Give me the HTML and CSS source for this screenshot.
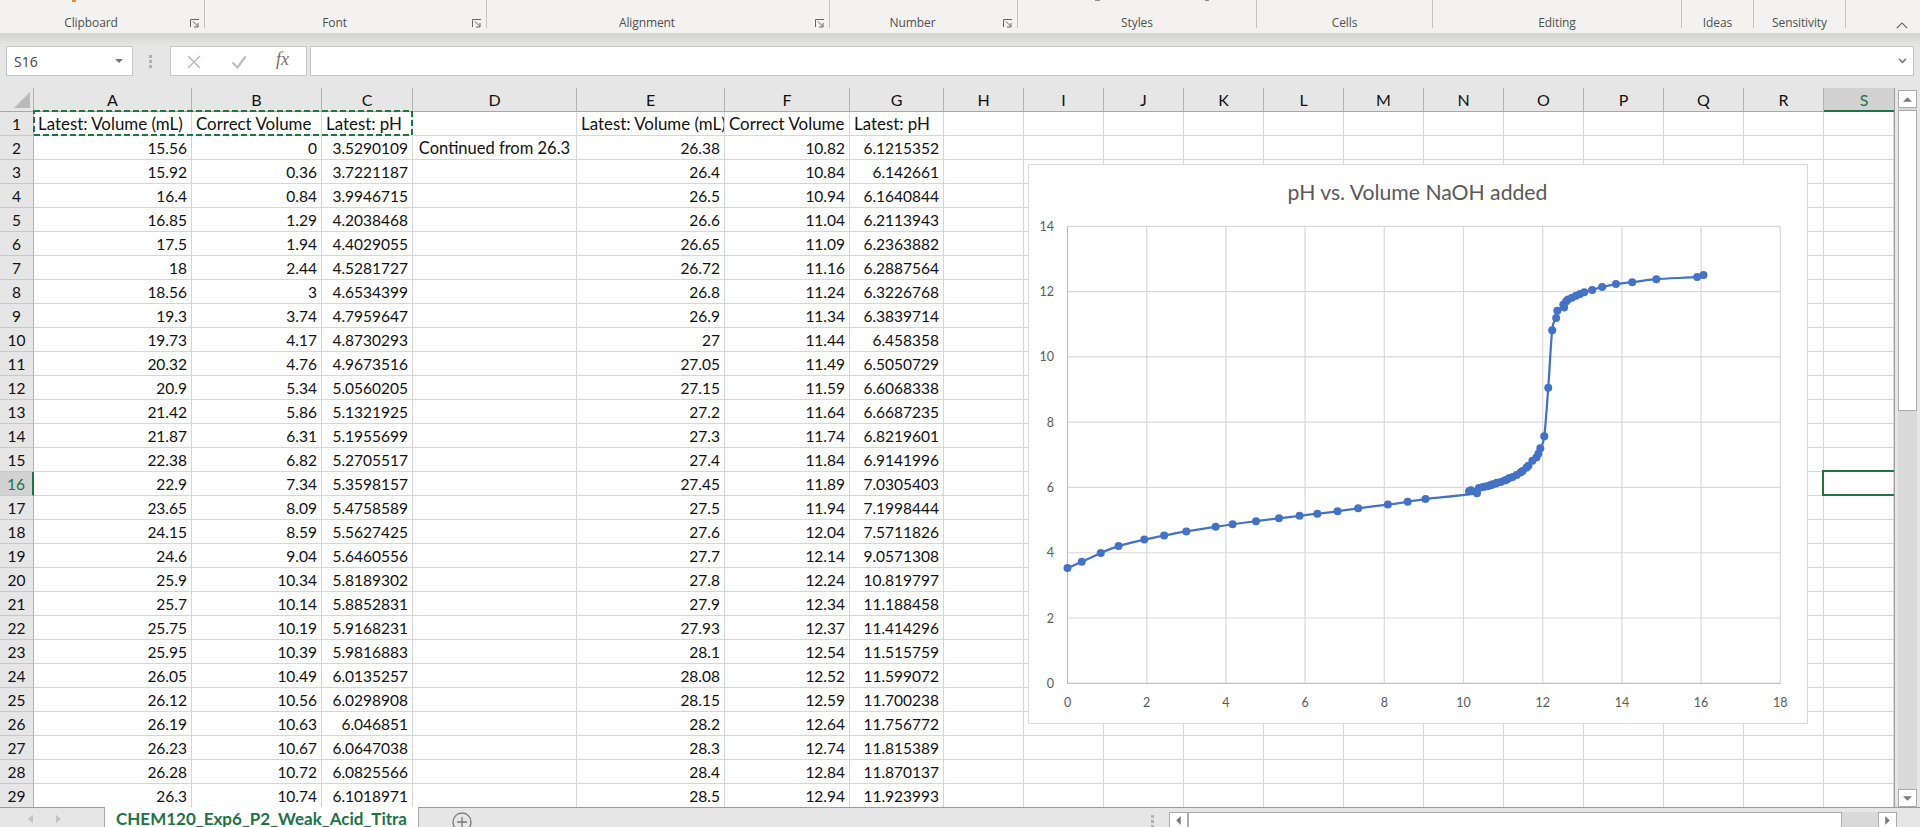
FILE: index.html
```html
<!DOCTYPE html>
<html lang="en">
<head>
<meta charset="utf-8">
<title>CHEM120 Exp6 P2 Weak Acid Titration</title>
<link rel="stylesheet" href="styles.css">
</head>
<body>
<header class="ribbon">
  <span class="frag frag-orange"></span>
  <span class="frag frag-g"></span>
  <span class="frag frag-y"></span>
  <section class="group g-clip"><span class="group-label">Clipboard</span><svg class="launch" viewBox="0 0 10 9"><path d="M.5 8V.5H9M3 2.5l5 5M8 4v4H4" /></svg></section>
  <section class="group g-font"><span class="group-label">Font</span><svg class="launch" viewBox="0 0 10 9"><path d="M.5 8V.5H9M3 2.5l5 5M8 4v4H4" /></svg></section>
  <section class="group g-align"><span class="group-label">Alignment</span><svg class="launch" viewBox="0 0 10 9"><path d="M.5 8V.5H9M3 2.5l5 5M8 4v4H4" /></svg></section>
  <section class="group g-num"><span class="group-label">Number</span><svg class="launch" viewBox="0 0 10 9"><path d="M.5 8V.5H9M3 2.5l5 5M8 4v4H4" /></svg></section>
  <section class="group g-styles plain"><span class="group-label">Styles</span></section>
  <section class="group g-cells plain"><span class="group-label">Cells</span></section>
  <section class="group g-edit plain"><span class="group-label">Editing</span></section>
  <section class="group g-ideas plain"><span class="group-label">Ideas</span></section>
  <section class="group g-sens plain"><span class="group-label">Sensitivity</span></section>
  <svg class="collapse" viewBox="0 0 14 8"><path d="M1 7l6-6 6 6"/></svg>
</header>

<div class="formula-zone">
  <div class="name-box"><span>S16</span><svg class="caret" viewBox="0 0 8 4"><path d="M0 0h8L4 4z"/></svg></div>
  <svg class="grip" viewBox="0 0 3 13"><path d="M0 0h3v3H0zM0 5h3v3H0zM0 10h3v3H0z"/></svg>
  <div class="fx-box">
    <svg class="fx-x" viewBox="0 0 14 14"><path d="M1 1l12 12M13 1L1 13"/></svg>
    <svg class="fx-check" viewBox="0 0 16 14"><path d="M1.5 7.5l5 5L14.5 1.5"/></svg>
    <span class="fx-label">fx</span>
  </div>
  <div class="formula-input"><svg class="expand" viewBox="0 0 10 7"><path d="M1 1l4 4 4-4"/></svg></div>
</div>

<main class="sheet-row">
  <div class="sheet" id="sheet">
    <table class="grid" id="grid">
      <colgroup>
        <col class="c-rh"><col class="c-a"><col class="c-b"><col class="c-c"><col class="c-d"><col class="c-e"><col class="c-f"><col class="c-g">
        <col class="c-x"><col class="c-x"><col class="c-x"><col class="c-x"><col class="c-x"><col class="c-x"><col class="c-x"><col class="c-x"><col class="c-x"><col class="c-x"><col class="c-x"><col class="c-s">
      </colgroup>
      <thead>
        <tr><th class="corner"><span class="tri"></span></th><th>A</th><th>B</th><th>C</th><th>D</th><th>E</th><th>F</th><th>G</th><th>H</th><th>I</th><th>J</th><th>K</th><th>L</th><th>M</th><th>N</th><th>O</th><th>P</th><th>Q</th><th>R</th><th class="sel">S</th></tr>
      </thead>
      <tbody>
        <tr><th>1</th><td>Latest: Volume (mL)</td><td>Correct Volume</td><td>Latest: pH</td><td></td><td>Latest: Volume (mL)</td><td>Correct Volume</td><td>Latest: pH</td><td></td><td></td><td></td><td></td><td></td><td></td><td></td><td></td><td></td><td></td><td></td><td></td></tr>
        <tr><th>2</th><td class="n">15.56</td><td class="n">0</td><td class="n">3.5290109</td><td class="m">Continued from 26.3</td><td class="n">26.38</td><td class="n">10.82</td><td class="n">6.1215352</td><td></td><td></td><td></td><td></td><td></td><td></td><td></td><td></td><td></td><td></td><td></td><td></td></tr>
        <tr><th>3</th><td class="n">15.92</td><td class="n">0.36</td><td class="n">3.7221187</td><td></td><td class="n">26.4</td><td class="n">10.84</td><td class="n">6.142661</td><td></td><td></td><td></td><td></td><td></td><td></td><td></td><td></td><td></td><td></td><td></td><td></td></tr>
        <tr><th>4</th><td class="n">16.4</td><td class="n">0.84</td><td class="n">3.9946715</td><td></td><td class="n">26.5</td><td class="n">10.94</td><td class="n">6.1640844</td><td></td><td></td><td></td><td></td><td></td><td></td><td></td><td></td><td></td><td></td><td></td><td></td></tr>
        <tr><th>5</th><td class="n">16.85</td><td class="n">1.29</td><td class="n">4.2038468</td><td></td><td class="n">26.6</td><td class="n">11.04</td><td class="n">6.2113943</td><td></td><td></td><td></td><td></td><td></td><td></td><td></td><td></td><td></td><td></td><td></td><td></td></tr>
        <tr><th>6</th><td class="n">17.5</td><td class="n">1.94</td><td class="n">4.4029055</td><td></td><td class="n">26.65</td><td class="n">11.09</td><td class="n">6.2363882</td><td></td><td></td><td></td><td></td><td></td><td></td><td></td><td></td><td></td><td></td><td></td><td></td></tr>
        <tr><th>7</th><td class="n">18</td><td class="n">2.44</td><td class="n">4.5281727</td><td></td><td class="n">26.72</td><td class="n">11.16</td><td class="n">6.2887564</td><td></td><td></td><td></td><td></td><td></td><td></td><td></td><td></td><td></td><td></td><td></td><td></td></tr>
        <tr><th>8</th><td class="n">18.56</td><td class="n">3</td><td class="n">4.6534399</td><td></td><td class="n">26.8</td><td class="n">11.24</td><td class="n">6.3226768</td><td></td><td></td><td></td><td></td><td></td><td></td><td></td><td></td><td></td><td></td><td></td><td></td></tr>
        <tr><th>9</th><td class="n">19.3</td><td class="n">3.74</td><td class="n">4.7959647</td><td></td><td class="n">26.9</td><td class="n">11.34</td><td class="n">6.3839714</td><td></td><td></td><td></td><td></td><td></td><td></td><td></td><td></td><td></td><td></td><td></td><td></td></tr>
        <tr><th>10</th><td class="n">19.73</td><td class="n">4.17</td><td class="n">4.8730293</td><td></td><td class="n">27</td><td class="n">11.44</td><td class="n">6.458358</td><td></td><td></td><td></td><td></td><td></td><td></td><td></td><td></td><td></td><td></td><td></td><td></td></tr>
        <tr><th>11</th><td class="n">20.32</td><td class="n">4.76</td><td class="n">4.9673516</td><td></td><td class="n">27.05</td><td class="n">11.49</td><td class="n">6.5050729</td><td></td><td></td><td></td><td></td><td></td><td></td><td></td><td></td><td></td><td></td><td></td><td></td></tr>
        <tr><th>12</th><td class="n">20.9</td><td class="n">5.34</td><td class="n">5.0560205</td><td></td><td class="n">27.15</td><td class="n">11.59</td><td class="n">6.6068338</td><td></td><td></td><td></td><td></td><td></td><td></td><td></td><td></td><td></td><td></td><td></td><td></td></tr>
        <tr><th>13</th><td class="n">21.42</td><td class="n">5.86</td><td class="n">5.1321925</td><td></td><td class="n">27.2</td><td class="n">11.64</td><td class="n">6.6687235</td><td></td><td></td><td></td><td></td><td></td><td></td><td></td><td></td><td></td><td></td><td></td><td></td></tr>
        <tr><th>14</th><td class="n">21.87</td><td class="n">6.31</td><td class="n">5.1955699</td><td></td><td class="n">27.3</td><td class="n">11.74</td><td class="n">6.8219601</td><td></td><td></td><td></td><td></td><td></td><td></td><td></td><td></td><td></td><td></td><td></td><td></td></tr>
        <tr><th>15</th><td class="n">22.38</td><td class="n">6.82</td><td class="n">5.2705517</td><td></td><td class="n">27.4</td><td class="n">11.84</td><td class="n">6.9141996</td><td></td><td></td><td></td><td></td><td></td><td></td><td></td><td></td><td></td><td></td><td></td><td></td></tr>
        <tr><th class="sel">16</th><td class="n">22.9</td><td class="n">7.34</td><td class="n">5.3598157</td><td></td><td class="n">27.45</td><td class="n">11.89</td><td class="n">7.0305403</td><td></td><td></td><td></td><td></td><td></td><td></td><td></td><td></td><td></td><td></td><td></td><td></td></tr>
        <tr><th>17</th><td class="n">23.65</td><td class="n">8.09</td><td class="n">5.4758589</td><td></td><td class="n">27.5</td><td class="n">11.94</td><td class="n">7.1998444</td><td></td><td></td><td></td><td></td><td></td><td></td><td></td><td></td><td></td><td></td><td></td><td></td></tr>
        <tr><th>18</th><td class="n">24.15</td><td class="n">8.59</td><td class="n">5.5627425</td><td></td><td class="n">27.6</td><td class="n">12.04</td><td class="n">7.5711826</td><td></td><td></td><td></td><td></td><td></td><td></td><td></td><td></td><td></td><td></td><td></td><td></td></tr>
        <tr><th>19</th><td class="n">24.6</td><td class="n">9.04</td><td class="n">5.6460556</td><td></td><td class="n">27.7</td><td class="n">12.14</td><td class="n">9.0571308</td><td></td><td></td><td></td><td></td><td></td><td></td><td></td><td></td><td></td><td></td><td></td><td></td></tr>
        <tr><th>20</th><td class="n">25.9</td><td class="n">10.34</td><td class="n">5.8189302</td><td></td><td class="n">27.8</td><td class="n">12.24</td><td class="n">10.819797</td><td></td><td></td><td></td><td></td><td></td><td></td><td></td><td></td><td></td><td></td><td></td><td></td></tr>
        <tr><th>21</th><td class="n">25.7</td><td class="n">10.14</td><td class="n">5.8852831</td><td></td><td class="n">27.9</td><td class="n">12.34</td><td class="n">11.188458</td><td></td><td></td><td></td><td></td><td></td><td></td><td></td><td></td><td></td><td></td><td></td><td></td></tr>
        <tr><th>22</th><td class="n">25.75</td><td class="n">10.19</td><td class="n">5.9168231</td><td></td><td class="n">27.93</td><td class="n">12.37</td><td class="n">11.414296</td><td></td><td></td><td></td><td></td><td></td><td></td><td></td><td></td><td></td><td></td><td></td><td></td></tr>
        <tr><th>23</th><td class="n">25.95</td><td class="n">10.39</td><td class="n">5.9816883</td><td></td><td class="n">28.1</td><td class="n">12.54</td><td class="n">11.515759</td><td></td><td></td><td></td><td></td><td></td><td></td><td></td><td></td><td></td><td></td><td></td><td></td></tr>
        <tr><th>24</th><td class="n">26.05</td><td class="n">10.49</td><td class="n">6.0135257</td><td></td><td class="n">28.08</td><td class="n">12.52</td><td class="n">11.599072</td><td></td><td></td><td></td><td></td><td></td><td></td><td></td><td></td><td></td><td></td><td></td><td></td></tr>
        <tr><th>25</th><td class="n">26.12</td><td class="n">10.56</td><td class="n">6.0298908</td><td></td><td class="n">28.15</td><td class="n">12.59</td><td class="n">11.700238</td><td></td><td></td><td></td><td></td><td></td><td></td><td></td><td></td><td></td><td></td><td></td><td></td></tr>
        <tr><th>26</th><td class="n">26.19</td><td class="n">10.63</td><td class="n">6.046851</td><td></td><td class="n">28.2</td><td class="n">12.64</td><td class="n">11.756772</td><td></td><td></td><td></td><td></td><td></td><td></td><td></td><td></td><td></td><td></td><td></td><td></td></tr>
        <tr><th>27</th><td class="n">26.23</td><td class="n">10.67</td><td class="n">6.0647038</td><td></td><td class="n">28.3</td><td class="n">12.74</td><td class="n">11.815389</td><td></td><td></td><td></td><td></td><td></td><td></td><td></td><td></td><td></td><td></td><td></td><td></td></tr>
        <tr><th>28</th><td class="n">26.28</td><td class="n">10.72</td><td class="n">6.0825566</td><td></td><td class="n">28.4</td><td class="n">12.84</td><td class="n">11.870137</td><td></td><td></td><td></td><td></td><td></td><td></td><td></td><td></td><td></td><td></td><td></td><td></td></tr>
        <tr><th>29</th><td class="n">26.3</td><td class="n">10.74</td><td class="n">6.1018971</td><td></td><td class="n">28.5</td><td class="n">12.94</td><td class="n">11.923993</td><td></td><td></td><td></td><td></td><td></td><td></td><td></td><td></td><td></td><td></td><td></td><td></td></tr>
      </tbody>
    </table>

    <svg class="ants" viewBox="0 0 380 26"><rect x="1" y="1" width="378" height="24"/></svg>
    <div class="active-cell"></div>

    <figure class="chart">
      <svg id="chart" class="chart-svg" viewBox="0 0 778 558"></svg>
    </figure>
  </div>

  <aside class="vscroll">
    <div class="sb-btn"><svg viewBox="0 0 10 5"><path d="M0 5h10L5 0z"/></svg></div>
    <div class="v-track"><div class="v-thumb"></div></div>
    <div class="sb-btn"><svg viewBox="0 0 10 5"><path d="M0 0h10L5 5z"/></svg></div>
  </aside>
</main>

<footer class="tabbar">
  <div class="tab-nav">
    <svg viewBox="0 0 6 10"><path d="M6 0v10L0 5z"/></svg>
    <svg viewBox="0 0 6 10"><path d="M0 0v10l6-5z"/></svg>
  </div>
  <div class="tab">CHEM120_Exp6_P2_Weak_Acid_Titra</div>
  <svg class="add" viewBox="0 0 20 20"><circle cx="10" cy="10" r="9"/><path d="M10 5v10M5 10h10"/></svg>
  <svg class="grip tab-grip" viewBox="0 0 3 13"><path d="M0 0h3v3H0zM0 5h3v3H0zM0 10h3v3H0z"/></svg>
  <div class="hscroll">
    <div class="h-btn"><svg viewBox="0 0 5 10"><path d="M5 0v10L0 5z"/></svg></div>
    <div class="h-track"><div class="h-thumb"></div></div>
    <div class="h-btn"><svg viewBox="0 0 5 10"><path d="M0 0v10l5-5z"/></svg></div>
  </div>
</footer>
<script src="app.js"></script>
</body>
</html>
```
FILE: styles.css
```css
* { box-sizing: border-box; }
html, body { margin: 0; height: 100%; }
body {
  width: 1920px; height: 827px; overflow: hidden;
  display: flex; flex-direction: column;
  background: #e6e6e6; color: #1a1a1a;
  font-family: "Lato", "Liberation Sans", sans-serif;
}

/* Ribbon */
.ribbon {
  position: relative; height: 33px; flex: none; display: flex;
  background: #f3f2f1; z-index: 2;
}
.frag { position: absolute; top: 0; height: 1px; }
.frag-orange { left: 72px; width: 4px; height: 2px; background: #e8873a; }
.frag-g { left: 1095px; width: 5px; background: #8a8a8a; }
.frag-y { left: 1205px; width: 4px; background: #8a8a8a; }
.group {
  position: relative; height: 28px; padding-right: 22px;
  border-right: 1px solid #c4c4c4;
  display: flex; align-items: flex-end; justify-content: center;
}
.group.plain { padding-right: 0; }
.group-label {
  font: 12px/16px "Open Sans", "Liberation Sans", sans-serif;
  color: #505050; margin-bottom: -3px; letter-spacing: -.1px;
}
.g-clip { width: 205px; } .g-font { width: 282px; } .g-align { width: 343px; } .g-num { width: 188px; }
.g-styles { width: 239px; } .g-cells { width: 176px; } .g-edit { width: 249px; } .g-ideas { width: 72px; } .g-sens { width: 92px; }
.launch {
  position: absolute; right: 4px; top: 19px; width: 10px; height: 9px;
  fill: none; stroke: #666; stroke-width: 1;
}
.collapse {
  position: absolute; left: 1896px; top: 22px; width: 12px; height: 7px;
  fill: none; stroke: #555; stroke-width: 1.2;
}

/* Formula bar */
.formula-zone {
  height: 55px; flex: none; padding: 13px 6px 12px;
  display: flex; align-items: stretch;
  background: linear-gradient(#d3d3d2 0, #e6e6e6 13px);
}
.name-box, .fx-box, .formula-input {
  background: #fff; border: 1px solid #c6c6c6; display: flex; align-items: center;
}
.name-box {
  width: 127px; padding: 0 8px 0 7px; justify-content: space-between;
  font: 14px "Open Sans", "Liberation Sans", sans-serif; color: #444;
}
.caret { width: 8px; height: 4px; fill: #777; margin-right: 1px; }
.grip { width: 3px; height: 13px; fill: #b0b0b0; align-self: center; margin: 0 18px 0 16px; }
.fx-box { width: 137px; position: relative; }
.fx-x { position: absolute; left: 16px; top: 8px; width: 14px; height: 14px; fill: none; stroke: #bdbdbd; stroke-width: 1.6; }
.fx-check { position: absolute; left: 60px; top: 8px; width: 16px; height: 14px; fill: none; stroke: #bdbdbd; stroke-width: 2.2; }
.fx-label {
  position: absolute; left: 105px; top: 2px;
  font: italic 18px "Liberation Serif", serif; color: #707070;
}
.formula-input { width: 1604px; margin-left: 3px; justify-content: flex-end; padding-right: 6px; }
.expand { width: 9px; height: 6px; fill: none; stroke: #777; stroke-width: 1.8; }

/* Sheet */
.sheet-row { display: flex; height: 719px; flex: none; }
.sheet {
  position: relative; width: 1895px; height: 719px; overflow: hidden;
  background: #fff; border-right: 1px solid #9f9f9f;
}
.grid {
  table-layout: fixed; border-collapse: separate; border-spacing: 0;
  width: 1894px; font-size: 16.9px; color: #111;
}
.c-rh { width: 34px; } .c-a { width: 158px; } .c-b { width: 130px; } .c-c { width: 91px; }
.c-d { width: 164px; } .c-e { width: 148px; } .c-f { width: 125px; } .c-g { width: 94px; }
.c-x { width: 80px; } .c-s { width: 70px; }
.grid tr { height: 24px; }
.grid td, .grid th { padding: 0; height: 24px; overflow: hidden; white-space: nowrap; }
.grid td {
  padding: 1px 4px 0; border-right: 1px solid #d6d6d6; border-bottom: 1px solid #d6d6d6;
  line-height: 22px;
}
.grid td.n { text-align: right; font-size: 15.5px; }
.grid td.m { text-align: center; font-size: 16.5px; }
.grid th {
  background: #e6e6e6; font-weight: 400; font-size: 15.5px; text-align: center;
}
.grid thead th { border-right: 1px solid #b2b2b2; border-bottom: 1px solid #a8a8a8; font-size: 16px; }
.grid thead th.sel { background: #d2d2d2; color: #217346; border-bottom: 2px solid #217346; border-right: 0; padding-left: 10px; }
.grid tbody th { border-right: 1px solid #b2b2b2; border-bottom: 1px solid #c8c8c8; }
.grid tbody th.sel { background: #d2d2d2; color: #217346; border-right: 2px solid #217346; }
.corner { position: relative; }
.tri {
  position: absolute; right: 3px; bottom: 3px; width: 16px; height: 16px;
  background: #b9b9b9; clip-path: polygon(100% 0, 100% 100%, 0 100%);
}
.ants {
  position: absolute; left: 33px; top: 22px; width: 380px; height: 26px;
  fill: none; stroke: #217346; stroke-width: 2; stroke-dasharray: 6 3;
}
.active-cell {
  position: absolute; left: 1822px; top: 382px; width: 72px; height: 26px;
  border: 2px solid #217346; border-right: 0;
}
.chart {
  position: absolute; left: 1029px; top: 77px; width: 778px; height: 558px; margin: 0;
  background: #fff; outline: 1px solid #d9d9d9;
}
.chart-svg { display: block; width: 778px; height: 558px; }
.chart-title { font: 21.2px "Lato", "Liberation Sans", sans-serif; fill: #595959; text-anchor: middle; }
.tick { font: 12.5px "Lato", "Liberation Sans", sans-serif; fill: #595959; }
.tick-x { text-anchor: middle; }
.tick-y { text-anchor: end; }
.gridline { stroke: #d9d9d9; stroke-width: 1.2; }
.axis { stroke: #bfbfbf; stroke-width: 1.2; }
.series { fill: none; stroke: #4472c4; stroke-width: 2.25; stroke-linecap: round; stroke-linejoin: round; }
.marker { fill: #4472c4; }

/* Vertical scrollbar */
.vscroll { width: 19px; margin-left: 3px; padding-top: 2px; display: flex; flex-direction: column; }
.sb-btn {
  height: 18px; flex: none; background: #fff; border: 1px solid #ababab;
  display: flex; align-items: center; justify-content: center;
}
.sb-btn svg { width: 9px; height: 5px; fill: #7a7a7a; }
.v-track { flex: 1; background: #d9d9d9; padding-top: 2px; }
.v-thumb { height: 301px; background: #fff; border: 1px solid #ababab; }

/* Tab bar */
.tabbar {
  height: 20px; flex: none; display: flex; align-items: flex-start;
  background: #e6e6e6; border-top: 1px solid #9c9c9c; position: relative;
}
.tab-nav { width: 104px; height: 19px; display: flex; gap: 23px; padding: 6px 0 0 28px; }
.tab-nav svg { width: 5px; height: 10px; fill: #c4c4c4; }
.tab {
  width: 315px; height: 20px; margin-top: -1px; padding-top: 1px;
  background: #fff; border: 1px solid #a8a8a8; border-top: 0; border-bottom: 0;
  text-align: center; color: #217346; font-weight: 700; font-size: 17px; line-height: 21px; white-space: nowrap;
}
.add {
  width: 20px; height: 20px; margin: 4px 0 0 33px; flex: none;
  fill: none; stroke: #7a7a7a; stroke-width: 1.3;
}
.tab-grip { margin: 7px 15px 0 679px; }
.hscroll { width: 728px; height: 15px; margin-top: 4px; display: flex; }
.h-btn {
  width: 19px; flex: none; background: #fff; border: 1px solid #ababab; border-bottom: 0;
  display: flex; align-items: center; justify-content: center;
}
.h-btn svg { width: 5px; height: 9px; fill: #7a7a7a; }
.h-track { flex: 1; background: #d9d9d9; display: flex; }
.h-thumb { width: 654px; background: #fff; border: 1px solid #ababab; border-bottom: 0; }
```
FILE: app.js
```js
// Draws the scatter chart from the Correct Volume / pH columns of the sheet,
// plus the rows below the visible part of the sheet.
(function () {
  var NS = 'http://www.w3.org/2000/svg';
  var svg = document.getElementById('chart');
  var X0 = 38.5, Y0 = 518.3, UX = 39.6, UY = 32.64;
  var px = function (v) { return X0 + UX * v; };
  var py = function (v) { return Y0 - UY * v; };

  function add(tag, attrs, text) {
    var el = document.createElementNS(NS, tag);
    for (var k in attrs) el.setAttribute(k, attrs[k]);
    if (text !== undefined) el.textContent = text;
    svg.appendChild(el);
    return el;
  }

  var rows = document.querySelectorAll('#grid tbody tr');
  var a = [], b = [];
  for (var i = 1; i < rows.length; i++) {
    var c = rows[i].children;
    a.push([parseFloat(c[2].textContent), parseFloat(c[3].textContent)]);
    b.push([parseFloat(c[6].textContent), parseFloat(c[7].textContent)]);
  }
  var tail = [[13.05, 11.98], [13.25, 12.05], [13.5, 12.14], [13.85, 12.23], [14.26, 12.29], [14.87, 12.38], [15.9, 12.45], [16.06, 12.51]];
  var data = a.concat(b, tail);

  add('text', { x: 388.5, y: 35, 'class': 'chart-title' }, 'pH vs. Volume NaOH added');

  var v;
  for (v = 2; v <= 14; v += 2) add('line', { x1: X0, x2: px(18), y1: py(v), y2: py(v), 'class': 'gridline' });
  for (v = 2; v <= 18; v += 2) add('line', { x1: px(v), x2: px(v), y1: py(0), y2: py(14), 'class': 'gridline' });
  add('line', { x1: X0, x2: X0, y1: py(0), y2: py(14), 'class': 'axis' });
  add('line', { x1: X0, x2: px(18), y1: py(0), y2: py(0), 'class': 'axis' });

  for (v = 0; v <= 14; v += 2) add('text', { x: 25, y: py(v) + 4.5, 'class': 'tick tick-y' }, v);
  for (v = 0; v <= 18; v += 2) add('text', { x: px(v), y: 542, 'class': 'tick tick-x' }, v);

  var pts = data.map(function (d) { return [px(d[0]), py(d[1])]; });
  var d = 'M' + pts[0][0].toFixed(2) + ' ' + pts[0][1].toFixed(2);
  for (i = 0; i < pts.length - 1; i++) {
    var p0 = pts[Math.max(i - 1, 0)], p1 = pts[i], p2 = pts[i + 1], p3 = pts[Math.min(i + 2, pts.length - 1)];
    d += 'C' + (p1[0] + (p2[0] - p0[0]) / 6).toFixed(2) + ' ' + (p1[1] + (p2[1] - p0[1]) / 6).toFixed(2) + ' ' +
      (p2[0] - (p3[0] - p1[0]) / 6).toFixed(2) + ' ' + (p2[1] - (p3[1] - p1[1]) / 6).toFixed(2) + ' ' +
      p2[0].toFixed(2) + ' ' + p2[1].toFixed(2);
  }
  add('path', { d: d, 'class': 'series' });
  pts.forEach(function (p) { add('circle', { cx: p[0], cy: p[1], r: 4, 'class': 'marker' }); });
})();
```
